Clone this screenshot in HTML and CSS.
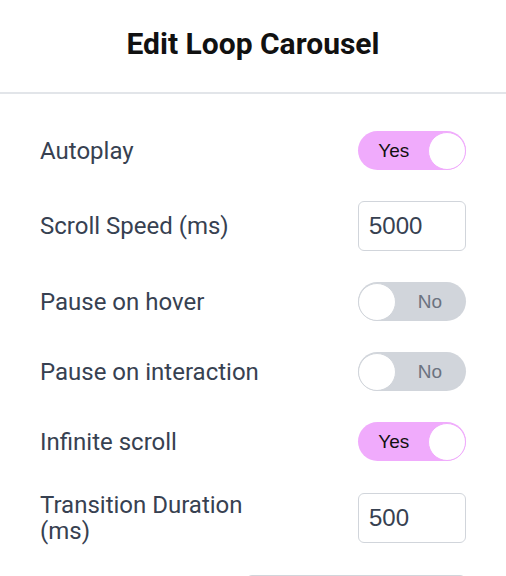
FILE: index.html
```html
<!DOCTYPE html>
<html lang="en">
<head>
<meta charset="utf-8">
<title>Edit Loop Carousel</title>
<link rel="stylesheet" href="styles.css">
</head>
<body>
<div class="panel">
  <header class="panel-header">
    <h1 class="panel-title">Edit Loop Carousel</h1>
  </header>
  <div class="settings">
    <div class="row">
      <span class="label">Autoplay</span>
      <div class="toggle toggle-on"><span class="toggle-text">Yes</span><span class="knob"></span></div>
    </div>
    <div class="row">
      <span class="label">Scroll Speed (ms)</span>
      <input class="num-input" type="text" value="5000">
    </div>
    <div class="row">
      <span class="label">Pause on hover</span>
      <div class="toggle toggle-off"><span class="knob"></span><span class="toggle-text">No</span></div>
    </div>
    <div class="row">
      <span class="label">Pause on interaction</span>
      <div class="toggle toggle-off"><span class="knob"></span><span class="toggle-text">No</span></div>
    </div>
    <div class="row">
      <span class="label">Infinite scroll</span>
      <div class="toggle toggle-on"><span class="toggle-text">Yes</span><span class="knob"></span></div>
    </div>
    <div class="row">
      <span class="label">Transition Duration (ms)</span>
      <input class="num-input" type="text" value="500">
    </div>
    <div class="row">
      <span class="label"></span>
      <div class="select-box"></div>
    </div>
  </div>
</div>
</body>
</html>
```

FILE: styles.css
```css
html, body {
  margin: 0;
  padding: 0;
  background: #ffffff;
}

body {
  font-family: Roboto, "Liberation Sans", Arial, sans-serif;
}

.panel {
  width: 506px;
}

.panel-header {
  padding: 26px 0 30px;
  border-bottom: 2px solid #e2e5e9;
  text-align: center;
}

.panel-title {
  margin: 0;
  font-size: 30px;
  line-height: 36px;
  font-weight: 700;
  color: #111111;
}

.settings {
  display: flex;
  flex-direction: column;
  gap: 31px;
  padding: 37px 40px 0;
}

.row {
  display: flex;
  align-items: center;
  justify-content: space-between;
}

.label {
  max-width: 240px;
  font-size: 24px;
  line-height: 26px;
  color: #374151;
}

.toggle {
  display: flex;
  align-items: center;
  width: 108px;
  height: 39px;
  border-radius: 20px;
  box-sizing: border-box;
  font-family: "Liberation Sans", Arial, sans-serif;
  font-size: 19px;
}

.toggle-text {
  flex: 1;
  text-align: center;
}

.knob {
  width: 38px;
  height: 38px;
  border-radius: 50%;
  background: #ffffff;
  box-sizing: border-box;
  flex: none;
}

.toggle-on {
  background: #f0abfc;
  color: #111111;
  padding-right: 0.5px;
}

.toggle-on .knob {
  border: 1.5px solid #f0abfc;
}

.toggle-on .toggle-text {
  padding-left: 2px;
}

.toggle-off {
  background: #d1d5db;
  color: #6b7280;
  padding-left: 0;
}

.toggle-off .knob {
  border: 1.5px solid #d1d5db;
}

.toggle-off .toggle-text {
  padding-right: 2px;
}

.num-input {
  width: 108px;
  height: 50px;
  box-sizing: border-box;
  border: 1.5px solid #d1d5db;
  border-radius: 6px;
  padding: 0 10px;
  margin: 0;
  font-family: "Liberation Sans", Arial, sans-serif;
  font-size: 24px;
  color: #374151;
  background: #ffffff;
  outline: none;
}

.select-box {
  width: 220px;
  height: 50px;
  box-sizing: border-box;
  border: 1.5px solid #d1d5db;
  border-radius: 6px;
}
```
